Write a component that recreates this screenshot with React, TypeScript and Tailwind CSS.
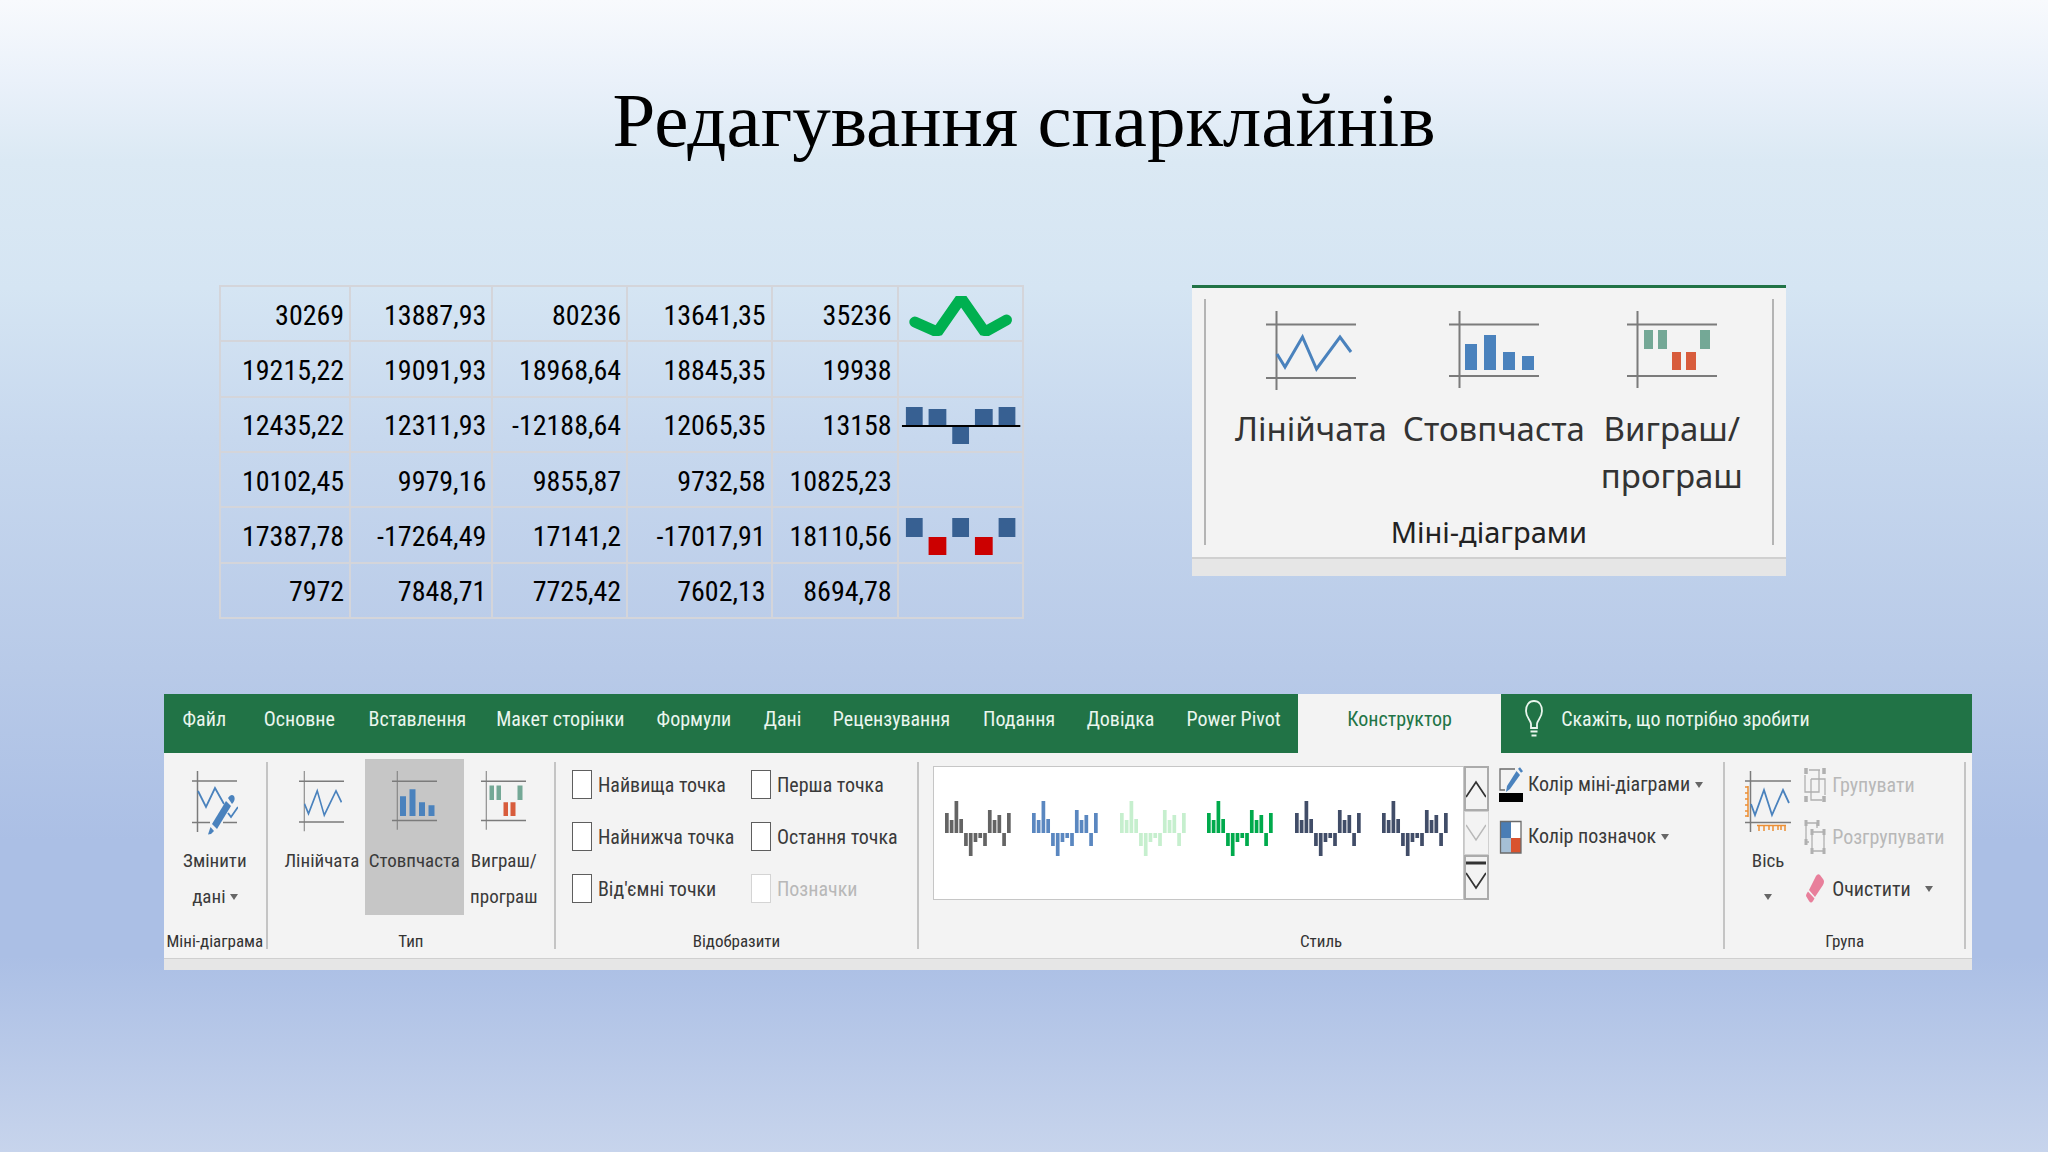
import type { ReactNode } from "react";

const rows = [
  ["30269", "13887,93", "80236", "13641,35", "35236"],
  ["19215,22", "19091,93", "18968,64", "18845,35", "19938"],
  ["12435,22", "12311,93", "-12188,64", "12065,35", "13158"],
  ["10102,45", "9979,16", "9855,87", "9732,58", "10825,23"],
  ["17387,78", "-17264,49", "17141,2", "-17017,91", "18110,56"],
  ["7972", "7848,71", "7725,42", "7602,13", "8694,78"],
];

const tabs = [
  "Файл",
  "Основне",
  "Вставлення",
  "Макет сторінки",
  "Формули",
  "Дані",
  "Рецензування",
  "Подання",
  "Довідка",
  "Power Pivot",
];

const checks = [
  { id: "high", label: "Найвища точка" },
  { id: "first", label: "Перша точка" },
  { id: "low", label: "Найнижча точка" },
  { id: "last", label: "Остання точка" },
  { id: "negative", label: "Від'ємні точки" },
  { id: "markers", label: "Позначки", disabled: true },
];

// sparkline bars of the style gallery, above and below the axis
const bars = [20, 13, 32, 14, -13, -23, -9, -5, -13, 23, 13, 18, -13, 20];
const styleColors = ["#646464", "#5a87c0", "#c6efce", "#00aa4c", "#414d68", "#414d68"];

/* Sparklines in the last column of the table */
const LineSparkline = () => (
  <svg viewBox="0 11 125 40" className="block h-10 w-full" preserveAspectRatio="none">
    <path
      d="M16 37L39 47L63 13L87 47L109 35"
      fill="none"
      stroke="#00b050"
      strokeWidth="11"
      strokeLinecap="round"
      strokeLinejoin="bevel"
    />
  </svg>
);

const ColumnSparkline = () => (
  <svg viewBox="0 0 125 40" className="block h-10 w-full" preserveAspectRatio="none">
    <path d="M7 1h17v19H7zM30 3h18v17H30zM54 20h17v18H54zM77 3h18v17H77zM101 1h17v19h-17z" fill="#376092" />
    <path d="M3 19h120v2H3z" />
  </svg>
);

const WinLossSparkline = () => (
  <svg viewBox="0 0 125 40" className="block h-10 w-full" preserveAspectRatio="none">
    <path d="M7 1h17v19H7zM54 1h17v19H54zM101 1h17v19h-17z" fill="#376092" />
    <path d="M30 20h18v18H30zM77 20h18v18H77z" fill="#cc0000" />
  </svg>
);

const sparklines: Record<number, ReactNode> = {
  0: <LineSparkline />,
  2: <ColumnSparkline />,
  4: <WinLossSparkline />,
};

/* Chart icons, shared by the card and the ribbon */
const ChartIcon = ({ className, low = 65, children }: { className: string; low?: number; children: ReactNode }) => (
  <svg viewBox="0 0 90 80" className={className} preserveAspectRatio="none" fill="none">
    <path d={`M10.500 0V${low + 14}M0 13.500H90M0 ${low + 2}H90`} stroke="#7b7b7b" strokeWidth="2" />
    {children}
  </svg>
);

const LineIcon = ({ className }: { className: string }) => (
  <ChartIcon className={className}>
    <path d="M11 43L19 56L36.500 26L50.500 58L74 26L85 41" stroke="#4a82bd" strokeWidth="3" />
  </ChartIcon>
);

const ColumnIcon = ({ className }: { className: string }) => (
  <ChartIcon className={className} low={63}>
    <path d="M16 33h12v26H16zM35 24h12v35H35zM54 41h12v18H54zM73 45h12v14H73z" fill="#4a82bd" />
  </ChartIcon>
);

const WinLossIcon = ({ className }: { className: string }) => (
  <ChartIcon className={className} low={63}>
    <path d="M17 19h9v19h-9zM31 19h9v19h-9zM73 19h10v19H73z" fill="#74a896" />
    <path d="M45 41h9v18h-9zM59 41h10v18H59z" fill="#d85c3c" />
  </ChartIcon>
);

const EditIcon = () => (
  <svg viewBox="0 0 46 64" className="h-16 w-[46px]" fill="none">
    <path d="M5.500 0V61M0 10H45M0 51.500H18M31 51.500H45" stroke="#7b7b7b" strokeWidth="1.500" />
    <path d="M6 20L14 36L23 17L32 33M36 42L39 46L46 36" stroke="#4a82bd" strokeWidth="1.800" />
    <path d="M34 30L39 35L25 58L20 53Z" fill="#4a82bd" />
    <path d="M36 27Q39 22 42 25Q44 29 40 33Z" fill="#4a82bd" />
    <path d="M18.500 56L22 60L19 63L16 63.500Z" fill="#4a82bd" />
  </svg>
);

const AxisIcon = () => (
  <svg viewBox="0 0 46 61" className="h-[61px] w-[46px]" fill="none">
    <path d="M5.500 0V61M0 10H46M0 51.500H46" stroke="#7b7b7b" strokeWidth="1.500" />
    <path d="M6 33L10 44L19 19L27 44L38 19L44 32" stroke="#4a82bd" strokeWidth="1.800" />
    <path d="M3 15V46M0 16H3M0 22H3M0 28H3M0 34H3M0 40H3M0 45H3" stroke="#ec8f35" strokeWidth="1.500" />
    <path d="M12 54.500H41M14 54V60M19 54V60M24 54V59M28 54V60M33 54V59M36 54V59M40 54V60" stroke="#ec8f35" strokeWidth="1.500" />
  </svg>
);

const PenColorIcon = () => (
  <svg viewBox="0 0 24 35" className="h-[35px] w-6 shrink-0" fill="none">
    <path d="M16 2H1V23H6" stroke="#6b6b6b" strokeWidth="1.300" />
    <path d="M17.500 4L21 8L11 22L7 25L8 19Z" fill="#4a82bd" />
    <path d="M20 1L23 5" stroke="#4a82bd" strokeWidth="2.500" />
    <path d="M0 26h24v9H0z" fill="#000" />
  </svg>
);

const MarkerColorIcon = () => (
  <svg viewBox="0 0 24 34" className="h-[34px] w-6 shrink-0" fill="none">
    <path d="M2 2h10v16H2z" fill="#4a7db5" />
    <path d="M12 2h10v16H12z" fill="#fff" />
    <path d="M2 18h10v15H2z" fill="#a5bfd6" />
    <path d="M12 18h10v15H12z" fill="#d9532f" />
    <path d="M1.500 1.500H22V33H1.500Z" stroke="#6b6b6b" strokeWidth="1.300" />
  </svg>
);

const GroupIcon = () => (
  <svg viewBox="0 0 22 34" className="h-[34px] w-[22px] shrink-0" fill="none" stroke="#b0b0b0">
    <path d="M5 2H16M1 7V24H15V2M7 11H21V27M7 11V32H17M15 32H18" strokeWidth="1.300" />
    <path d="M2 0V6M20 0V6M2 28V34M20 28V34" strokeWidth="3.500" />
  </svg>
);

const UngroupIcon = () => (
  <svg viewBox="0 0 22 34" className="h-[34px] w-[22px] shrink-0" fill="none" stroke="#b0b0b0">
    <path d="M3 3H13V8M2 5V22M2 22H5M8 12H20V31H8Z" strokeWidth="1.300" />
    <path d="M2 0V6M14 0V6M2 19V25M8 9V15M20 9V15M8 28V34M20 28V34" strokeWidth="3" />
  </svg>
);

const EraserIcon = () => (
  <svg viewBox="0 0 22 34" className="h-[34px] w-[22px] shrink-0" fill="#e87f9b">
    <path d="M12 4Q14 1 16 3L19 7Q21 9 19 13L11 25L5 18Z" />
    <path d="M4 19.500L10.500 26.500L9 29Q7 32 5 29L2 24Q2 22 4 19.500Z" />
  </svg>
);

const BulbIcon = () => (
  <svg viewBox="0 0 18 37" className="h-[37px] w-[18px]" fill="none" stroke="#eaf6ee" strokeWidth="1.800">
    <path d="M6 28V24C6 20 1 18 1 11C1 5 4 1 9 1C14 1 17 5 17 11C17 18 12 20 12 24V28Z" />
    <path d="M5.500 31.500H12.500M6.500 35.500H11.500" />
  </svg>
);

const Caret = () => (
  <svg viewBox="0 0 8 6" className="inline-block h-[6px] w-2 shrink-0">
    <path d="M0 0h8L4 6z" fill="#666" />
  </svg>
);

const StyleSparkline = ({ color }: { color: string }) => (
  <svg viewBox="0 0 66 55" className="h-[55px] w-[66px]" fill={color}>
    {bars.map((value, i) => (
      <rect key={i} x={i * 4.77} y={value > 0 ? 32 - value : 32} width="3.7" height={Math.abs(value)} />
    ))}
  </svg>
);

const RibbonGroup = ({ title, children }: { title: string; children: ReactNode }) => (
  <section className="my-[9px] flex flex-col justify-between border-r-2 border-[#c4c4c4]">
    <div className="-mt-[3px] flex">{children}</div>
    <h2 className="text-center text-[17px] leading-4 whitespace-nowrap text-[#333]">{title}</h2>
  </section>
);

const SparklineCard = () => (
  <div className="w-[29%] border-t-[3px] border-[#217346] bg-[#f3f3f3] font-['Noto_Sans',sans-serif] text-[#333]">
    <div className="mx-3 mt-[11px] border-x-2 border-[#b4b4b4]">
      <div className="flex justify-center pt-3 text-[33px] leading-[47px]">
        <button className="flex w-[170px] flex-col items-center">
          <LineIcon className="mb-[14px] h-20 w-[90px]" />
          Лінійчата
        </button>
        <button className="flex w-[196px] flex-col items-center">
          <ColumnIcon className="mb-[14px] h-20 w-[90px]" />
          Стовпчаста
        </button>
        <button className="flex w-[160px] flex-col items-center">
          <WinLossIcon className="mb-[14px] h-20 w-[90px]" />
          Виграш/
          <br />
          програш
        </button>
      </div>
      <h2 className="pt-5 text-center text-[29px] leading-[26px] text-[#222]">Міні-діаграми</h2>
    </div>
    <div className="mt-3 h-[19px] border-t-2 border-[#d0d0d0] bg-[#e6e6e6]"></div>
  </div>
);

const Ribbon = () => (
  <div className="mt-[75px] mr-[3.7%] ml-[8%] bg-[#f3f3f3] font-['Roboto_Condensed',Roboto,sans-serif] text-[#3a3a3a]">
    {/* Tabs */}
    <nav className="grid h-[59px] grid-cols-[81fr_109fr_127fr_159fr_108fr_69fr_149fr_106fr_97fr_129fr_203fr_471fr] text-[20px] whitespace-nowrap text-[#eaf6ee]">
      {tabs.map((tab) => (
        <button key={tab} className="bg-[#217346] pb-[10px]">
          {tab}
        </button>
      ))}
      <button className="bg-[#f3f3f3] pb-[10px] text-[#217346]">Конструктор</button>
      <button className="flex items-center gap-[18px] bg-[#217346] pb-[10px] pl-6">
        <BulbIcon />
        Скажіть, що потрібно зробити
      </button>
    </nav>

    <div className="grid h-[205px] grid-cols-[104fr_288fr_363fr_806fr_241fr_6fr]">
      <RibbonGroup title="Міні-діаграма">
        <button className="flex w-full flex-col items-center pt-3 text-[19px] leading-9">
          <EditIcon />
          <span className="mt-2">Змінити</span>
          <span className="flex items-center gap-1">
            дані <Caret />
          </span>
        </button>
      </RibbonGroup>

      <RibbonGroup title="Тип">
        <div className="flex pl-[11px] text-[19px] leading-9">
          <button className="flex w-[86px] flex-col items-center pt-3">
            <LineIcon className="mb-[11px] h-[61px] w-[45px]" />
            Лінійчата
          </button>
          <button className="flex h-[156px] w-[99px] flex-col items-center bg-[#c6c6c6] pt-3">
            <ColumnIcon className="mb-[11px] h-[61px] w-[45px]" />
            Стовпчаста
          </button>
          <button className="flex w-20 flex-col items-center pt-3">
            <WinLossIcon className="mb-[11px] h-[61px] w-[45px]" />
            Виграш/
            <br />
            програш
          </button>
        </div>
      </RibbonGroup>

      <RibbonGroup title="Відобразити">
        <div className="grid grid-cols-[179px_auto] gap-y-[23px] pt-[11px] pl-4 text-[20px] leading-[30px] whitespace-nowrap">
          {checks.map(({ id, label, disabled }) => (
            <label key={id} htmlFor={id} className={disabled ? "flex h-[29px] gap-[6px] text-[#b8b8b8]" : "flex h-[29px] gap-[6px]"}>
              <input
                id={id}
                type="checkbox"
                disabled={disabled}
                className="h-[29px] w-5 appearance-none border border-[#5e5e5e] bg-white disabled:border-[#d4d4d4]"
              />
              {label}
            </label>
          ))}
        </div>
      </RibbonGroup>

      <RibbonGroup title="Стиль">
        <div className="mt-[7px] ml-[14px] flex h-[134px] w-[556px]">
          <div className="flex grow items-center justify-around border border-[#c6c6c6] bg-white pr-1 pb-[10px]">
            {styleColors.map((color, i) => (
              <button key={i} aria-label={`Стиль ${i + 1}`}>
                <StyleSparkline color={color} />
              </button>
            ))}
          </div>
          <div className="flex w-[25px] flex-col">
            <button aria-label="Вгору" className="flex flex-1 items-center justify-center border-2 border-[#ababab]">
              <svg viewBox="0 0 20 18" className="h-[18px] w-5" fill="none" stroke="#333" strokeWidth="1.800">
                <path d="M0 17L10 2L20 17" />
              </svg>
            </button>
            <button aria-label="Вниз" className="flex flex-1 items-center justify-center border border-[#d0d0d0]">
              <svg viewBox="0 0 20 18" className="h-[18px] w-5" fill="none" stroke="#b8b8b8" strokeWidth="1.500">
                <path d="M0 1L10 16L20 1" />
              </svg>
            </button>
            <button aria-label="Додатково" className="flex flex-1 items-center justify-center border-2 border-[#ababab]">
              <svg viewBox="0 0 20 36" className="h-9 w-5" fill="none" stroke="#333" strokeWidth="1.800">
                <path d="M0 4H20" strokeWidth="3" />
                <path d="M0 14L10 29L20 14" />
              </svg>
            </button>
          </div>
        </div>
        <div className="flex flex-col items-start gap-[17px] pt-2 pl-[10px] text-[20px] leading-[35px] whitespace-nowrap">
          <button className="flex items-center gap-[5px]">
            <PenColorIcon />
            Колір міні-діаграми
            <Caret />
          </button>
          <button className="flex items-center gap-[5px]">
            <MarkerColorIcon />
            Колір позначок
            <Caret />
          </button>
        </div>
      </RibbonGroup>

      <RibbonGroup title="Група">
        <button className="ml-5 flex w-[46px] flex-col items-center pt-3 text-[19px] leading-9">
          <AxisIcon />
          <span className="mt-[11px]">Вісь</span>
          <span className="flex h-9 items-center">
            <Caret />
          </span>
        </button>
        <div className="flex flex-col items-start gap-[18px] pt-[9px] pl-[13px] text-[20px] leading-[34px] whitespace-nowrap">
          <button disabled className="flex items-center gap-[6px] text-[#b8b8b8]">
            <GroupIcon />
            Групувати
          </button>
          <button disabled className="flex items-center gap-[6px] text-[#b8b8b8]">
            <UngroupIcon />
            Розгрупувати
          </button>
          <button className="flex items-center gap-[6px]">
            <EraserIcon />
            <span className="mr-2">Очистити</span>
            <Caret />
          </button>
        </div>
      </RibbonGroup>
    </div>
    <div className="h-3 border-t border-[#cfcfcf] bg-[#e6e6e6]"></div>
  </div>
);

export default function App() {
  return (
    <main className="min-h-screen bg-[linear-gradient(180deg,#f8fafd_0%,#eaf1fa_7%,#dbe9f4_14%,#d5e5f3_25%,#c7d8ee_38%,#b8cae8_58%,#abbfe5_73%,#abbfe5_83%,#c7d4ec_100%)] pt-20">
      <h1 className="text-center font-['Liberation_Serif',serif] text-[77px] leading-[80px] text-black">
        Редагування спарклайнів
      </h1>

      <div className="mt-[125px] flex items-start">
        <table className="ml-[10.7%] h-[334px] w-[39.3%] table-fixed border-collapse font-['Roboto_Condensed',Roboto,sans-serif] text-[28px] leading-8 text-black">
          <colgroup>
            <col className="w-[16.2%]" />
            <col className="w-[17.7%]" />
            <col className="w-[16.8%]" />
            <col className="w-[18%]" />
            <col className="w-[15.7%]" />
            <col />
          </colgroup>
          <tbody>
            {rows.map((row, i) => (
              <tr key={i} className="h-[55px]">
                {row.map((value) => (
                  <td key={value} className="border-2 border-[#d4d5da] pt-1 pr-[5px] text-right">
                    {value}
                  </td>
                ))}
                <td className="border-2 border-[#d4d5da] p-0 pt-1">{sparklines[i]}</td>
              </tr>
            ))}
          </tbody>
        </table>
        <div className="w-[8.2%]"></div>
        <SparklineCard />
      </div>

      <Ribbon />
    </main>
  );
}
